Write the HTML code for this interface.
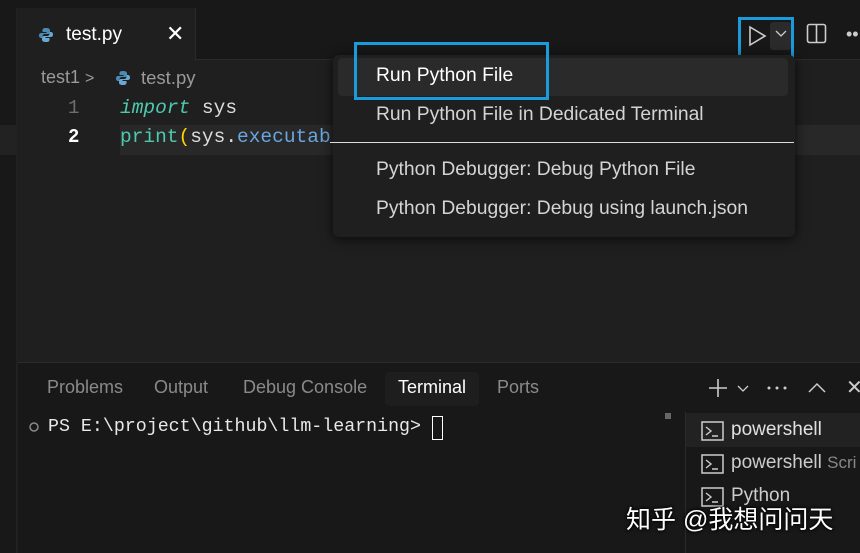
<!DOCTYPE html>
<html><head><meta charset="utf-8"><style>
*{margin:0;padding:0;box-sizing:border-box}
body{width:860px;height:553px;overflow:hidden;background:#1f1f1f;font-family:"Segoe UI","Liberation Sans","Noto Sans CJK SC",sans-serif;position:relative;color:#ccc}
.a{position:absolute;white-space:nowrap}
.mono{font-family:"Liberation Mono","DejaVu Sans Mono",monospace}
.m{font-size:19.3px}
</style></head><body>
<div class="a" style="left:0;top:0;width:860px;height:8px;background:#181818"></div>
<div class="a" style="left:0;top:8px;width:17px;height:545px;background:#181818;border-right:1px solid #222"></div>
<div class="a" style="left:0;top:125px;width:17px;height:30px;background:#222"></div>
<div class="a" style="left:18px;top:8px;width:842px;height:52px;background:#181818;border-bottom:1px solid #2a2a2a"></div>
<div class="a" style="left:18px;top:8px;width:178px;height:53px;background:#1f1f1f;border-right:1px solid #2a2a2a"></div>
<svg class="a" style="left:38px;top:27px" width="16" height="16" viewBox="0 0 16 16"><path d="M8 1C5 1 4.5 2 4.5 3.5V5h4v1H3C1.5 6 1 7.5 1 8.5S1.5 11 3 11h1.5V9.5C4.5 8 5.5 7 7 7h3c1 0 2-1 2-2V3.5C12 2 11 1 8 1z" fill="#4a8ab5"/><path d="M8 15c3 0 3.5-1 3.5-2.5V11h-4v-1H13c1.5 0 2-1.5 2-2.5S14.5 5 13 5h-1.5v1.5C11.5 8 10.5 9 9 9H6c-1 0-2 1-2 2v1.5C4 14 5 15 8 15z" fill="#6aa9d4"/></svg>
<div class="a" style="left:66px;top:24px;font-size:19px;color:#fff">test.py</div>
<div class="a" style="left:166px;top:21px;font-size:22px;color:#fff">✕</div>
<div class="a" style="left:41px;top:67px;font-size:18px;color:#9a9a9a">test1 <span style="font-size:16px">&gt;</span></div>
<svg class="a" style="left:115px;top:70px" width="16" height="16" viewBox="0 0 16 16"><path d="M8 1C5 1 4.5 2 4.5 3.5V5h4v1H3C1.5 6 1 7.5 1 8.5S1.5 11 3 11h1.5V9.5C4.5 8 5.5 7 7 7h3c1 0 2-1 2-2V3.5C12 2 11 1 8 1z" fill="#4a8ab5"/><path d="M8 15c3 0 3.5-1 3.5-2.5V11h-4v-1H13c1.5 0 2-1.5 2-2.5S14.5 5 13 5h-1.5v1.5C11.5 8 10.5 9 9 9H6c-1 0-2 1-2 2v1.5C4 14 5 15 8 15z" fill="#6aa9d4"/></svg>
<div class="a" style="left:141px;top:67px;font-size:18.5px;color:#9a9a9a">test.py</div>
<div class="a" style="left:120px;top:125px;width:740px;height:30px;background:#282828"></div>
<div class="a mono" style="left:68px;top:97px;font-size:19px;color:#6e6e6e">1</div>
<div class="a mono" style="left:68px;top:126px;font-size:19px;color:#fff;font-weight:bold">2</div>
<div class="a mono" style="left:120px;top:97px;font-size:19.5px;color:#ddd"><i style="color:#4ec9b0">import</i> sys</div>
<div class="a mono" style="left:120px;top:126px;font-size:19.5px;color:#ddd"><span style="color:#4ec9b0">print</span><span style="color:#ffd700">(</span>sys.<span style="color:#69a6e0">executabl</span></div>
<!-- right toolbar -->
<div class="a" style="left:738px;top:17px;width:56px;height:45px;border:3px solid #1a9bdc"></div>
<div class="a" style="left:770px;top:22px;width:21px;height:28px;background:#2b2b2b;border-radius:3px"></div>
<svg class="a" style="left:748px;top:25px" width="20" height="22"><path d="M2 2L17 11L2 20Z" fill="none" stroke="#ccc" stroke-width="1.6"/></svg>
<svg class="a" style="left:775px;top:30px" width="12" height="8"><path d="M1 1L6 6L11 1" fill="none" stroke="#ccc" stroke-width="1.3"/></svg>
<svg class="a" style="left:806px;top:23px" width="22" height="22"><rect x="1.5" y="1.5" width="18" height="18" rx="2" fill="none" stroke="#ccc" stroke-width="1.6"/><path d="M10.5 2v17" stroke="#ccc" stroke-width="1.6"/></svg>
<div class="a" style="left:846px;top:24px;font-size:18px;color:#ccc">••</div>
<!-- dropdown -->
<div class="a" style="left:333px;top:55px;width:462px;height:182px;background:#1f1f1f;border-radius:6px;box-shadow:0 2px 12px rgba(0,0,0,.7)"></div>
<div class="a" style="left:338px;top:58px;width:450px;height:38px;background:#2a2a2a;border-radius:4px"></div>
<div class="a" style="left:354px;top:42px;width:195px;height:58px;border:3px solid #1a9bdc"></div>
<div class="a m" style="left:376px;top:65px;color:#fff">Run Python File</div>
<div class="a m" style="left:376px;top:104px;color:#d4d4d4">Run Python File in Dedicated Terminal</div>
<div class="a" style="left:330px;top:142px;width:464px;height:1px;background:#ddd"></div>
<div class="a m" style="left:376px;top:159px;color:#d4d4d4">Python Debugger: Debug Python File</div>
<div class="a m" style="left:376px;top:198px;color:#d4d4d4">Python Debugger: Debug using launch.json</div>
<!-- panel -->
<div class="a" style="left:18px;top:362px;width:842px;height:191px;background:#181818;border-top:1px solid #2b2b2b"></div>
<div class="a" style="left:47px;top:377px;font-size:18px;color:#8a8a8a">Problems</div>
<div class="a" style="left:154px;top:377px;font-size:18px;color:#8a8a8a">Output</div>
<div class="a" style="left:243px;top:377px;font-size:18px;color:#8a8a8a">Debug Console</div>
<div class="a" style="left:385px;top:372px;width:94px;height:34px;background:#1e1e1e;border-radius:4px"></div>
<div class="a" style="left:398px;top:377px;font-size:18px;color:#fff">Terminal</div>
<div class="a" style="left:497px;top:377px;font-size:18px;color:#8a8a8a">Ports</div>
<svg class="a" style="left:708px;top:378px" width="130" height="20"><path d="M10 1v18M1 10h18" stroke="#ccc" stroke-width="1.6"/><path d="M30 8l5 5l5-5" fill="none" stroke="#ccc" stroke-width="1.3"/><circle cx="61" cy="10" r="1.5" fill="#ccc"/><circle cx="69" cy="10" r="1.5" fill="#ccc"/><circle cx="77" cy="10" r="1.5" fill="#ccc"/><path d="M101 14l8-8l8 8" fill="none" stroke="#ccc" stroke-width="1.5"/></svg>
<div class="a" style="left:846px;top:375px;font-size:20px;color:#ccc">✕</div>
<svg class="a" style="left:28px;top:421px" width="12" height="12"><circle cx="6" cy="6" r="4" fill="none" stroke="#888" stroke-width="1.5"/></svg>
<div class="a mono" style="left:48px;top:417px;font-size:18.3px;color:#e8e8e8">PS E:\project\github\llm-learning&gt;</div>
<div class="a" style="left:432px;top:416px;width:11px;height:24px;border:1.5px solid #fff"></div>
<div class="a" style="left:665px;top:413px;width:6px;height:6px;background:#666"></div>
<div class="a" style="left:685px;top:412px;width:175px;height:141px;background:#181818;border-left:1px solid #2b2b2b"></div>
<div class="a" style="left:686px;top:413px;width:174px;height:34px;background:#222"></div>
<svg class="a" style="left:701px;top:421px" width="24" height="20"><rect x="1" y="1" width="21" height="18" fill="none" stroke="#ccc" stroke-width="1.5"/><path d="M5 6l5 4l-5 4M11 15h6" fill="none" stroke="#ccc" stroke-width="1.4"/></svg>
<div class="a" style="left:731px;top:419px;font-size:19px;color:#e0e0e0">powershell</div>
<svg class="a" style="left:701px;top:454px" width="24" height="20"><rect x="1" y="1" width="21" height="18" fill="none" stroke="#ccc" stroke-width="1.5"/><path d="M5 6l5 4l-5 4M11 15h6" fill="none" stroke="#ccc" stroke-width="1.4"/></svg>
<div class="a" style="left:731px;top:452px;font-size:19px;color:#ccc">powershell <span style="font-size:17px;color:#888">Scri</span></div>
<svg class="a" style="left:701px;top:487px" width="24" height="20"><rect x="1" y="1" width="21" height="18" fill="none" stroke="#ccc" stroke-width="1.5"/><path d="M5 6l5 4l-5 4M11 15h6" fill="none" stroke="#ccc" stroke-width="1.4"/></svg>
<div class="a" style="left:731px;top:485px;font-size:19px;color:#ccc">Python</div>
<div class="a" style="left:626px;top:500px;font-size:25px;color:#fff;text-shadow:0 0 3px #000,0 0 3px #000">知乎 @我想问问天</div>
</body></html>
